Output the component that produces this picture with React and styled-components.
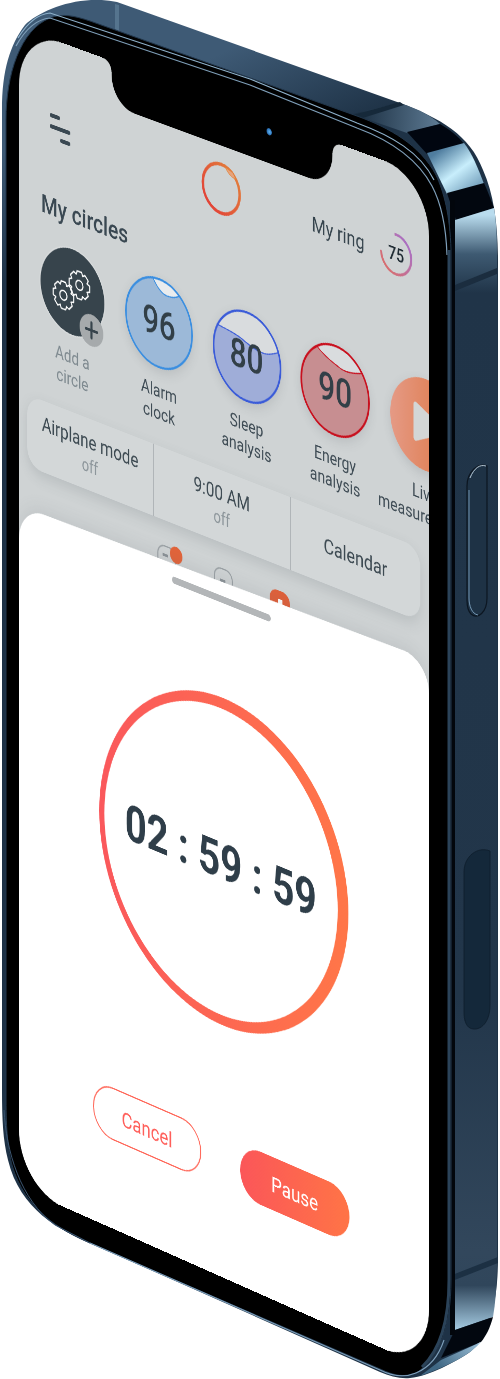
import React from 'react'
import styled, { createGlobalStyle } from 'styled-components'
import { Plus } from 'lucide-react'

const GlobalStyle = createGlobalStyle`
  html, body {
    margin: 0;
    padding: 0;
    background: #fff;
    font-family: Roboto, "Liberation Sans", sans-serif;
  }
`

const Stage = styled.div`
  position: relative;
  width: 500px;
  height: 1379px;
  overflow: hidden;
  background: #fff;
`

const PhoneBody = styled.svg`
  display: block;
  width: 500px;
  height: 1379px;
`

// the flat 390x844 screen, projected onto the tilted phone
const Screen = styled.div`
  position: absolute;
  left: 0;
  top: 0;
  width: 390px;
  height: 844px;
  transform-origin: 0 0;
  transform: matrix3d(1.02175, 0.37243, 0, -0.00006884, 0, 1.37441, 0, 0, 0, 0, 1, 0, 19, 27, 0, 1);
  background: #cfd3d4;
  border-radius: 42px;
  overflow: hidden;
  color: #36444d;
`

const Notch = styled.div`
  position: absolute;
  left: 90px;
  top: 0;
  width: 210px;
  height: 32px;
  background: #000;
  border-radius: 0 0 22px 22px;

  &::before,
  &::after {
    content: '';
    position: absolute;
    top: 0;
    width: 8px;
    height: 8px;
  }

  &::before {
    left: -8px;
    background: radial-gradient(circle at 0 100%, transparent 7.6px, #000 8px);
  }

  &::after {
    right: -8px;
    background: radial-gradient(circle at 100% 100%, transparent 7.6px, #000 8px);
  }
`

const Camera = styled.span`
  position: absolute;
  left: 148px;
  top: 7px;
  width: 5px;
  height: 5px;
  border-radius: 50%;
  background: radial-gradient(circle at 55% 50%, #62b4f0, #1c5fa8 80%);
`

const TopBar = styled.div`
  display: grid;
  grid-template-columns: 146px 38px 1fr;
  align-items: center;
  height: 38px;
  margin-top: 44px;
  padding: 0 15px 0 30px;
`

const MenuIcon = styled.div`
  display: flex;
  flex-direction: column;
  gap: 5px;
  width: 20px;
`

const MenuLine = styled.span`
  display: block;
  height: 3px;
  border-radius: 2px;
  background: #3a4852;
  width: ${(props) => props.$w}px;
  align-self: ${(props) => (props.$end ? 'flex-end' : 'flex-start')};
`

const RingArea = styled.div`
  display: flex;
  align-items: center;
  justify-content: flex-end;
  gap: 14px;
`

const RingTitle = styled.span`
  font-size: 15px;
  color: #36444d;
  white-space: nowrap;
  transform: translateY(1px);
`

const MiniRing = styled.div`
  display: grid;
  place-items: center;
  width: 31px;
  height: 31px;

  > * {
    grid-area: 1 / 1;
  }
`

const MiniValue = styled.span`
  font-size: 13px;
  font-weight: 500;
  color: #1e2a32;
`

const Heading = styled.h2`
  margin: 29px 0 10px 21.5px;
  font-size: 18.5px;
  line-height: 22px;
  font-weight: 500;
  color: #3a4852;
`

const CircleRow = styled.div`
  display: flex;
  gap: 17.5px;
  padding-left: 19px;
`

const CircleItem = styled.div`
  flex: none;
  display: flex;
  flex-direction: column;
  align-items: center;
  width: 66px;
`

const CircleFace = styled.div`
  position: relative;
  display: grid;
  place-items: center;
  width: 65px;
  height: 65px;
  margin-top: 1px;
  border-radius: 50%;
  box-shadow: 0 3px 8px rgba(80, 90, 95, 0.16);

  > * {
    grid-area: 1 / 1;
  }
`

const CircleValue = styled.span`
  position: relative;
  font-size: 28px;
  font-weight: 500;
  color: #323f47;
`

const CircleLabel = styled.div`
  margin-top: 9px;
  font-size: 13px;
  line-height: 15.5px;
  text-align: center;
  white-space: nowrap;
  color: ${(props) => (props.$muted ? '#7f8a90' : '#3f4c55')};
`

const AddBadge = styled.span`
  position: absolute;
  right: 1px;
  bottom: -3px;
  display: flex;
  align-items: center;
  justify-content: center;
  width: 23px;
  height: 23px;
  border-radius: 50%;
  background: #a6aaac;
  color: #37444c;
`

const AddFace = styled(CircleFace)`
  width: 62px;
  height: 62px;
  margin-top: 3.5px;
  margin-bottom: 0.5px;
  background: #37444c;
  box-shadow: 0 0 0 1px rgba(255, 255, 255, 0.2);
`

const TileCard = styled.div`
  display: grid;
  grid-template-columns: 122px 130px 122px;
  height: 51.5px;
  margin: 16px 8px 0;
  border-radius: 14px;
  background: #d3d7d8;
  box-shadow: 0 4px 10px rgba(90, 100, 105, 0.18);
`

const Tile = styled.div`
  display: flex;
  flex-direction: column;
  align-items: center;
  justify-content: center;
  border-left: ${(props) => (props.$divided ? '1px solid #b0b5b8' : 'none')};
`

const TileTitle = styled.span`
  font-size: ${(props) => (props.$big ? 15 : 14.5)}px;
  line-height: 17px;
  color: #3d4a52;
  white-space: nowrap;
`

const TileHint = styled.span`
  font-size: 12.5px;
  line-height: 17px;
  color: #8d969b;
`

const NavRow = styled.div`
  display: flex;
  gap: 35.5px;
  margin-top: 18.5px;
  padding-left: 134px;
`

const NavIcon = styled.div`
  position: relative;
  width: ${(props) => (props.$solid ? 19 : 18)}px;
  height: 24px;
  border-radius: 7px;
  box-sizing: border-box;
  border: ${(props) => (props.$solid ? 'none' : '1.5px solid #9ba1a5')};
  background: ${(props) => (props.$solid ? '#e0603a' : 'transparent')};
`

const NavDot = styled.span`
  position: absolute;
  right: -7px;
  top: -3px;
  width: 12px;
  height: 12px;
  border-radius: 50%;
  background: #e2643a;
`

const NavMark = styled.span`
  position: absolute;
  left: ${(props) => (props.$low ? 5.5 : 3.5)}px;
  top: ${(props) => (props.$low ? 7 : 5)}px;
  width: 5px;
  height: 1.5px;
  background: #8c9398;
`

const NavPip = styled.span`
  position: absolute;
  left: 7.5px;
  top: 6px;
  width: 4px;
  height: 6px;
  background: #fff;
`

const Sheet = styled.div`
  position: absolute;
  left: 0;
  right: 0;
  top: 345px;
  bottom: 0;
  isolation: isolate;
  display: flex;
  flex-direction: column;
  align-items: center;
  padding-top: 9.5px;

  // its top edge runs a little less steep than the rest of the screen
  &::before {
    content: '';
    position: absolute;
    z-index: -1;
    left: 0;
    right: 0;
    top: 0;
    bottom: -20px;
    background: #fff;
    border-radius: 24px 24px 0 0;
    box-shadow: 0 -3px 12px rgba(90, 100, 105, 0.12);
    transform: skewY(-0.9deg);
  }
`

const Handle = styled.div`
  width: 94px;
  height: 5px;
  border-radius: 3px;
  background: #b3b6b8;
`

const Timer = styled.div`
  display: flex;
  width: 237px;
  height: 235px;
  margin: 68.5px 0 0 2px;
  padding: 7.5px;
  box-sizing: border-box;
  border-radius: 50%;
  background: linear-gradient(90deg, #fa585c 0%, #ff7648 100%);
`

const TimerFace = styled.div`
  flex: 1;
  display: flex;
  align-items: center;
  justify-content: center;
  border-radius: 50%;
  background: #fff;
  font-size: 36.5px;
  font-weight: 700;
  color: #2f3e49;
  white-space: pre;
  transform: translateX(-2px);
`

const ButtonRow = styled.div`
  display: flex;
  gap: 37px;
  margin: 79px 0 0 -2px;
`

const Button = styled.button`
  width: ${(props) => (props.$filled ? 103 : 104)}px;
  height: 38px;
  padding: 0;
  border-radius: 19px;
  font-family: inherit;
  font-size: 16px;
  border: ${(props) => (props.$filled ? 'none' : '1px solid #ff6a5c')};
  color: ${(props) => (props.$filled ? '#fff' : '#ff5f5a')};
  background: ${(props) => (props.$filled ? 'linear-gradient(90deg, #fb5659, #ff7446)' : '#fff')};
`

// outline gear, teeth built from the angle
const gearPath = (cx, cy, outer, inner, teeth) => {
  const step = (Math.PI * 2) / teeth
  const pts = []
  for (let i = 0; i < teeth; i++) {
    const a = i * step
    ;[
      [inner, -0.5],
      [outer, -0.28],
      [outer, 0.28],
      [inner, 0.5],
    ].forEach(([r, k]) => {
      const t = a + k * step
      pts.push(`${(cx + Math.cos(t) * r).toFixed(2)} ${(cy + Math.sin(t) * r).toFixed(2)}`)
    })
  }
  return `M${pts.join('L')}Z`
}

const Gears = () => (
  <svg width="62" height="62" viewBox="0 0 64 64" fill="none" stroke="#fff" strokeWidth="1.1" strokeLinejoin="round">
    <path d={gearPath(23, 37, 10.5, 8.2, 8)} />
    <circle cx="23" cy="37" r="3.6" />
    <path d={gearPath(39, 25, 10.5, 8.2, 8)} />
    <circle cx="39" cy="25" r="3.6" />
  </svg>
)

const Gauge = ({ id, fill, ring, top, wave }) => (
  <svg width="65" height="65" viewBox="0 0 66 66">
    <clipPath id={id}>
      <circle cx="33" cy="33" r="33" />
    </clipPath>
    <circle cx="33" cy="33" r="32.5" fill={fill} />
    <path d={wave} fill={top} stroke={ring} strokeWidth="0.9" clipPath={`url(#${id})`} />
    <circle cx="33" cy="33" r="32.2" fill="none" stroke={ring} strokeWidth="1.6" />
  </svg>
)

const LiveFace = () => (
  <svg width="65" height="65" viewBox="0 0 66 66">
    <defs>
      <linearGradient id="live" x1="0" y1="0" x2="1" y2="0">
        <stop offset="0" stopColor="#e59a85" />
        <stop offset="1" stopColor="#dd7440" />
      </linearGradient>
    </defs>
    <circle cx="33" cy="33" r="33" fill="url(#live)" />
    <path d="M24 21 L50 33 L24 45 Z" fill="#d3d6d6" stroke="#d3d6d6" strokeWidth="4" strokeLinejoin="round" />
  </svg>
)

const LogoRing = () => (
  <svg width="38" height="38" viewBox="0 0 38 38" fill="none">
    <defs>
      <linearGradient id="logo" x1="0" y1="1" x2="1" y2="0">
        <stop offset="0" stopColor="#e23a36" />
        <stop offset="1" stopColor="#e2843c" />
      </linearGradient>
    </defs>
    <circle cx="19" cy="19" r="17.5" stroke="url(#logo)" strokeWidth="2.4" />
    <path d="M23 2.5 C25 6 28 8 33 8.5 L30 4.5 Z" fill="#e6a37c" stroke="#e2843c" strokeWidth="0.6" />
  </svg>
)

const ScoreRing = () => (
  <svg width="31" height="31" viewBox="0 0 32 32" fill="none">
    <defs>
      <linearGradient id="score" x1="1" y1="0" x2="0" y2="1">
        <stop offset="0" stopColor="#a26fd0" />
        <stop offset="1" stopColor="#df6e62" />
      </linearGradient>
    </defs>
    <path d="M14.5 1.6 A14.5 14.5 0 1 1 1.5 16.8" stroke="url(#score)" strokeWidth="2" />
  </svg>
)

const Phone = () => (
  <PhoneBody viewBox="0 0 500 1379" xmlns="http://www.w3.org/2000/svg">
    <defs>
      <linearGradient id="shell" gradientUnits="userSpaceOnUse" x1="250" y1="40" x2="300" y2="150">
        <stop offset="0" stopColor="#3e5a75" />
        <stop offset="1" stopColor="#1e3246" />
      </linearGradient>
      <linearGradient id="side" gradientUnits="userSpaceOnUse" x1="470" y1="215" x2="470" y2="1330">
        <stop offset="0" stopColor="#b9dcee" />
        <stop offset="0.035" stopColor="#3e5a72" />
        <stop offset="0.07" stopColor="#203448" />
        <stop offset="0.7" stopColor="#22364a" />
        <stop offset="0.93" stopColor="#32475c" />
        <stop offset="0.96" stopColor="#30465b" />
        <stop offset="1" stopColor="#a5cbe2" />
      </linearGradient>
      <linearGradient id="glare" gradientUnits="userSpaceOnUse" x1="440" y1="150" x2="470" y2="190">
        <stop offset="0" stopColor="#4f7d9f" />
        <stop offset="0.55" stopColor="#c8eefc" />
        <stop offset="1" stopColor="#7ea9c4" />
      </linearGradient>
      <linearGradient id="topGlare" gradientUnits="userSpaceOnUse" x1="360" y1="120" x2="440" y2="125">
        <stop offset="0" stopColor="#1d3144" />
        <stop offset="1" stopColor="#5e7b94" />
      </linearGradient>
      <linearGradient id="foot" gradientUnits="userSpaceOnUse" x1="440" y1="1370" x2="480" y2="1335">
        <stop offset="0" stopColor="#3f6784" />
        <stop offset="1" stopColor="#a4c8df" />
      </linearGradient>
    </defs>

    {/* shell */}
    <path
      d="M117 2 L400 103 C440 118 470 135 483 170 C494 195 498 225 498 262 L498 1258 C498 1300 490 1335 470 1352 C455 1362 430 1376 410 1378 C400 1379 390 1376 380 1372 L90 1243 C60 1230 20 1210 8 1160 C3 1140 2 1120 2 1090 L2 110 C2 70 10 45 25 25 C40 10 80 -6 117 2 Z"
      fill="url(#shell)"
    />
    <path d="M115 4 L119 5 L119 31 L115 29 Z" fill="#5f7f99" opacity="0.7" />

    {/* top right corner band */}
    <path d="M352 114 L400 103 C420 110 430 115 440 124 L407 133 Z" fill="url(#topGlare)" />
    <path d="M346 117 L400 102 L404 105 L353 121 Z" fill="#16293a" />
    <path d="M407 132 L440 124 C450 130 458 136 464 144 L427 154 Z" fill="#010610" />
    <path d="M427 153 L464 143 C472 153 478 168 484 184 L447 194 Z" fill="url(#glare)" />
    <path d="M447 193 L484 183 C488 192 491 200 494 208 L456 220 Z" fill="#02070f" />

    {/* right side face */}
    <path d="M455 220 L494 208 C497 225 497 245 497 262 L497 1258 C497 1280 496 1300 493 1317 L455 1330 Z" fill="url(#side)" />
    <path d="M455 285 L497 268 L497 274 L455 291 Z" fill="#1b2d3f" />
    <path d="M447 1277 L498 1257 L498 1263 L447 1283 Z" fill="#1c3043" />
    <path d="M455 1330 L493 1317 C490 1328 486 1336 481 1342 L441 1358 Z" fill="#02070f" />
    <path d="M441 1360 L481 1342 C470 1355 450 1365 420 1376 Z" fill="url(#foot)" />

    {/* bezel and metal rim */}
    <path d="M452.5 200 L452.5 1335" fill="none" stroke="#02060c" strokeWidth="5" />
    <path
      d="M6 120 C6 75 20 30 50 18 C62 13 75 16 90 21 L357 116 C390 128 420 145 436 175 C444 192 450 215 451 250 L451 1280 C451 1325 440 1355 418 1372 C405 1378 395 1376 380 1369 L90 1243 C60 1230 25 1210 12 1165 C8 1150 6 1130 6 1100 Z"
      fill="#000"
      stroke="#22374c"
      strokeWidth="1"
    />
    <path d="M18 38 C28 22 38 14 50 13 L250 79 L357 123 C392 136 420 152 434 180" fill="none" stroke="#8eb1cb" strokeWidth="1.2" />
    <path d="M16 46 C26 28 38 19 50 18 L250 85 L357 128 C392 141 418 160 432 186 C441 203 446 225 447 255" fill="none" stroke="#7f9fb9" strokeWidth="1.2" />
    <path d="M449 250 L449 1280 C449 1320 440 1350 422 1367" fill="none" stroke="#2b4359" strokeWidth="3" />
    <path d="M90 1243 L380 1370 C392 1376 404 1378 416 1373 C428 1368 438 1358 444 1340" fill="none" stroke="#7fa0bb" strokeWidth="1.1" />
    <path d="M4 1110 C6 1150 20 1200 55 1225 L90 1243" fill="none" stroke="#3b5570" strokeWidth="1" />

    {/* buttons */}
    <path d="M467 486 C467 472 478 462 487 466 L487 598 C487 612 478 620 471 614 C468 611 467 606 467 600 Z" fill="#1e3245" stroke="#0c1621" strokeWidth="1.2" />
    <path d="M469 490 L469 598 C469 606 472 614 478 615" fill="none" stroke="#7ea3bf" strokeWidth="0.9" />
    <path d="M470 478 C474 468 480 464 486 466" fill="none" stroke="#c7d9e6" strokeWidth="0.9" />
    <path d="M464 872 C464 856 478 846 490 851 L490 1005 C490 1025 478 1032 470 1028 C466 1026 464 1020 464 1012 Z" fill="#14283a" stroke="#0e1d2b" strokeWidth="0.8" />
  </PhoneBody>
)

const App = () => {
  return (
    <>
      <GlobalStyle />
      <Stage>
        <Phone />
        <Screen>
          <Notch>
            <Camera />
          </Notch>

          <TopBar>
            <MenuIcon>
              <MenuLine $w={10} />
              <MenuLine $w={20} />
              <MenuLine $w={10} $end />
            </MenuIcon>
            <LogoRing />
            <RingArea>
              <RingTitle>My ring</RingTitle>
              <MiniRing>
                <ScoreRing />
                <MiniValue>75</MiniValue>
              </MiniRing>
            </RingArea>
          </TopBar>

          <Heading>My circles</Heading>

          <CircleRow>
            <CircleItem>
              <AddFace>
                <Gears />
                <AddBadge>
                  <Plus size={19} strokeWidth={2.6} />
                </AddBadge>
              </AddFace>
              <CircleLabel $muted>
                Add a
                <br />
                circle
              </CircleLabel>
            </CircleItem>
            <CircleItem>
              <CircleFace>
                <Gauge id="alarm" fill="#9cb9d8" ring="#3a8ee0" top="#e9ecee" wave="M25 -2 C30 7 36 11 41 11 C46 11 50 10 54 7 L54 -2 Z" />
                <CircleValue>96</CircleValue>
              </CircleFace>
              <CircleLabel>
                Alarm
                <br />
                clock
              </CircleLabel>
            </CircleItem>
            <CircleItem>
              <CircleFace>
                <Gauge id="sleep" fill="#9fadd8" ring="#3a5bd8" top="#d9dcde" wave="M-2 17 C10 18 20 19 27 21 C35 24 42 26 48 26 C54 26 60 23 68 19 L68 -2 L-2 -2 Z" />
                <CircleValue>80</CircleValue>
              </CircleFace>
              <CircleLabel>
                Sleep
                <br />
                analysis
              </CircleLabel>
            </CircleItem>
            <CircleItem>
              <CircleFace>
                <Gauge id="energy" fill="#c78e91" ring="#c8101e" top="#d9dcde" wave="M13 4 C22 11 30 13 36 15 C41 17 47 17 60 13 L60 -2 L13 -2 Z" />
                <CircleValue>90</CircleValue>
              </CircleFace>
              <CircleLabel>
                Energy
                <br />
                analysis
              </CircleLabel>
            </CircleItem>
            <CircleItem>
              <CircleFace>
                <LiveFace />
              </CircleFace>
              <CircleLabel>
                Live
                <br />
                measurements
              </CircleLabel>
            </CircleItem>
          </CircleRow>

          <TileCard>
            <Tile>
              <TileTitle>Airplane mode</TileTitle>
              <TileHint>off</TileHint>
            </Tile>
            <Tile $divided>
              <TileTitle>9:00 AM</TileTitle>
              <TileHint>off</TileHint>
            </Tile>
            <Tile $divided>
              <TileTitle $big>Calendar</TileTitle>
            </Tile>
          </TileCard>

          <NavRow>
            <NavIcon>
              <NavMark />
              <NavDot />
            </NavIcon>
            <NavIcon>
              <NavMark $low />
            </NavIcon>
            <NavIcon $solid>
              <NavPip />
            </NavIcon>
          </NavRow>

          <Sheet>
            <Handle />
            <Timer>
              <TimerFace>02 : 59 : 59</TimerFace>
            </Timer>
            <ButtonRow>
              <Button>Cancel</Button>
              <Button $filled>Pause</Button>
            </ButtonRow>
          </Sheet>
        </Screen>
      </Stage>
    </>
  )
}

export default App
